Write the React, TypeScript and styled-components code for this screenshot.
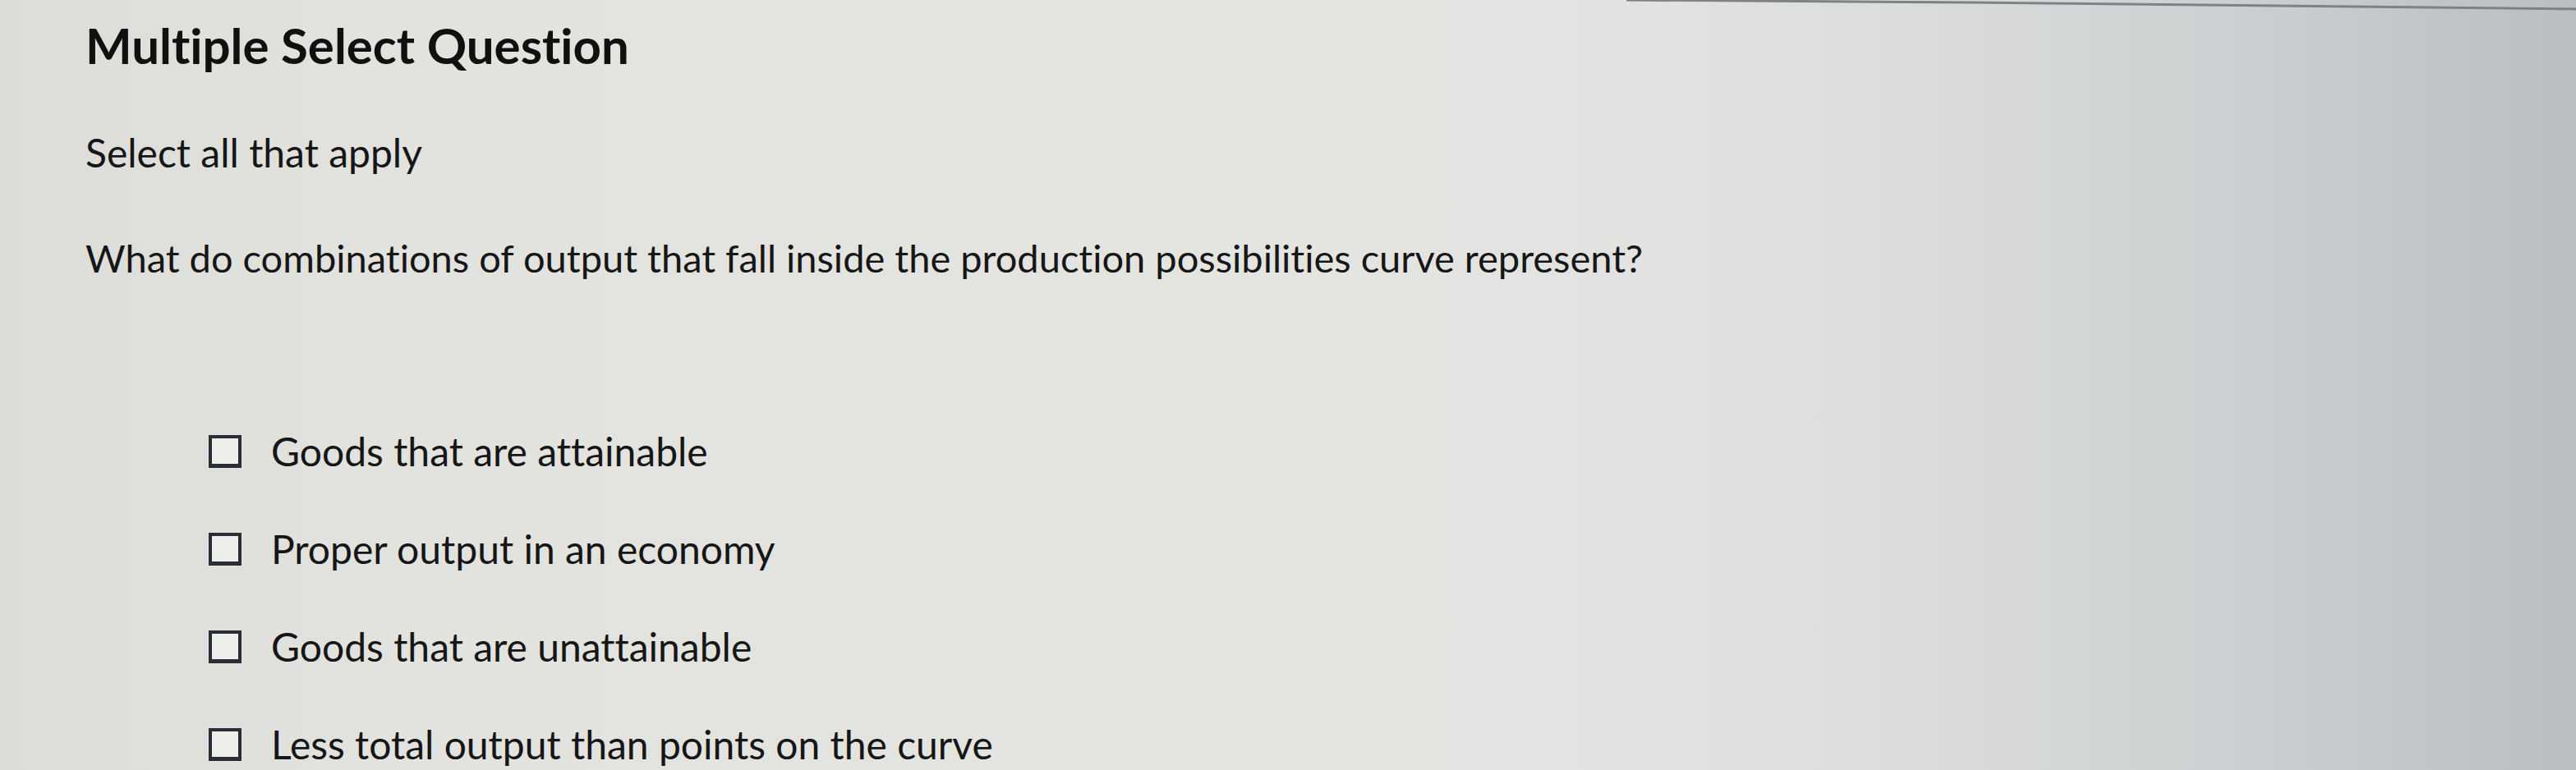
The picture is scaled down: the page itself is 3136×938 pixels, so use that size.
import React from "react";
import styled, { createGlobalStyle } from "styled-components";

const Global = createGlobalStyle`
  html, body { margin: 0; padding: 0; }
  body {
    width: 3136px;
    height: 938px;
    overflow: hidden;
    font-family: Lato, "Open Sans", "Liberation Sans", sans-serif;
    font-variant-ligatures: none;
    font-feature-settings: "liga" 0, "clig" 0;
  }
`;

const Screen = styled.main`
  position: relative;
  width: 3136px;
  height: 938px;
  box-sizing: border-box;
  padding: 20px 0 0 104px;
  background: linear-gradient(
    90deg,
    #dcdcd8 0%,
    #e2e2de 15%,
    #e4e4e1 52%,
    #e2e3e1 64%,
    #d9dbda 76%,
    #caced0 88%,
    #b8bec1 100%
  );
  color: #161616;
  display: flex;
  flex-direction: column;
  overflow: hidden;
`;

const Title = styled.h1`
  margin: 0;
  font-size: 60px;
  font-weight: 700;
  line-height: 70px;
  color: #101010;
`;

const Instruction = styled.p`
  margin: 68px 0 0;
  font-size: 48px;
  line-height: 56px;
  font-weight: 400;
`;

const Prompt = styled.p`
  margin: 72px 0 0;
  font-size: 47px;
  line-height: 56px;
  font-weight: 400;
  white-space: nowrap;
`;

const Options = styled.ul`
  list-style: none;
  margin: 180px 0 0;
  padding: 0 0 0 150px;
  display: flex;
  flex-direction: column;
  gap: 63px;
`;

const Option = styled.li`
  display: flex;
  align-items: center;
  gap: 36px;
  font-size: 48px;
  line-height: 56px;
  height: 56px;
  white-space: nowrap;
`;

const Box = styled.span`
  width: 40px;
  height: 40px;
  box-sizing: border-box;
  border: 4px solid #2a2e37;
  border-bottom-width: 5px;
  background: #eeeeea;
  flex: none;
`;

const Bezel = styled.svg`
  position: absolute;
  top: 0;
  left: 0;
  width: 3136px;
  height: 20px;
  pointer-events: none;
`;

const options = [
  "Goods that are attainable",
  "Proper output in an economy",
  "Goods that are unattainable",
  "Less total output than points on the curve",
];

export default function App() {
  return (
    <>
      <Global />
      <Screen>
        <Bezel viewBox="0 0 3136 20">
          <path d="M1980 0 L2400 3 L3136 11" stroke="#7c8386" strokeWidth="3" fill="none" />
        </Bezel>
        <Title>Multiple Select Question</Title>
        <Instruction>Select all that apply</Instruction>
        <Prompt>
          What do combinations of output that fall inside the production possibilities curve represent?
        </Prompt>
        <Options>
          {options.map((o) => (
            <Option key={o}>
              <Box />
              {o}
            </Option>
          ))}
        </Options>
      </Screen>
    </>
  );
}
